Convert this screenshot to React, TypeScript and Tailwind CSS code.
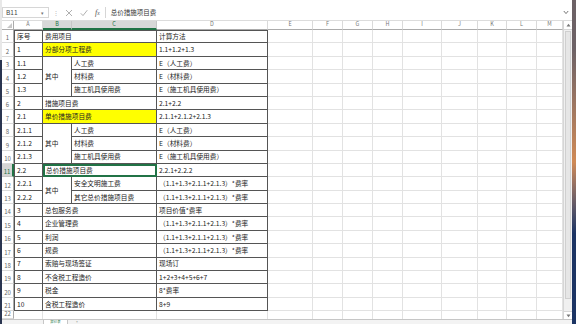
import React from "react"

const COLS = ["A", "B", "C", "D", "E", "F", "G", "H", "I", "J", "K", "L", "M"]
const EMPTY = ["E", "F", "G", "H", "I", "J", "K", "L", "M"]
const RATE = "（1.1+1.3+2.1.1+2.1.3）*费率"

type Row = {
  a: string
  bc?: string
  b?: string
  span?: 2 | 3
  c?: string
  d: string
  yellow?: boolean
  sel?: boolean
}

const rows: Row[] = [
  { a: "序号", bc: "费用项目", d: "计算方法" },
  { a: "1", bc: "分部分项工程费", yellow: true, d: "1.1+1.2+1.3" },
  { a: "1.1", b: "其中", span: 3, c: "人工费", d: "E（人工费）" },
  { a: "1.2", c: "材料费", d: "E（材料费）" },
  { a: "1.3", c: "施工机具使用费", d: "E（施工机具使用费）" },
  { a: "2", bc: "措施项目费", d: "2.1+2.2" },
  { a: "2.1", bc: "单价措施项目费", yellow: true, d: "2.1.1+2.1.2+2.1.3" },
  { a: "2.1.1", b: "其中", span: 3, c: "人工费", d: "E（人工费）" },
  { a: "2.1.2", c: "材料费", d: "E（材料费）" },
  { a: "2.1.3", c: "施工机具使用费", d: "E（施工机具使用费）" },
  { a: "2.2", bc: "总价措施项目费", sel: true, d: "2.2.1+2.2.2" },
  { a: "2.2.1", b: "其中", span: 2, c: "安全文明施工费", d: RATE },
  { a: "2.2.2", c: "其它总价措施项目费", d: RATE },
  { a: "3", bc: "总包服务费", d: "项目价值*费率" },
  { a: "4", bc: "企业管理费", d: RATE },
  { a: "5", bc: "利润", d: RATE },
  { a: "6", bc: "规费", d: RATE },
  { a: "7", bc: "索赔与现场签证", d: "现场订" },
  { a: "8", bc: "不含税工程造价", d: "1+2+3+4+5+6+7" },
  { a: "9", bc: "税金", d: "8*费率" },
  { a: "10", bc: "含税工程造价", d: "8+9" },
]

const cell = "flex items-center pl-[2px] leading-none whitespace-nowrap text-[6.7px] text-[#222] border-r border-b border-[#555]"

function RowHead({ n }: { n: number }) {
  const active = n === 11
  return (
    <div
      className={
        active
          ? "flex items-end justify-center pb-[1px] text-[6px] leading-none text-[#217346] bg-[#d4d4d4] border-b border-[#c6c6c6] border-r-2 border-r-[#217346]"
          : "flex items-end justify-center pb-[1px] text-[6px] leading-none text-[#666] bg-white border-b border-[#dadada] border-r border-r-[#ababab]"
      }
    >
      {n}
    </div>
  )
}

export default function App() {
  const cells: React.ReactNode[] = []

  // header row
  cells.push(
    <div key="corner" className="relative border-r border-b border-[#ababab] bg-white">
      <div className="absolute right-[1px] bottom-[1px] h-0 w-0 [border-bottom:5px_solid_#c8c8c8] [border-left:5px_solid_transparent]" />
    </div>
  )
  COLS.forEach((c) => {
    const active = c === "B" || c === "C"
    cells.push(
      <div
        key={"h" + c}
        className={
          active
            ? "flex items-center justify-center text-[5.5px] leading-none text-[#217346] bg-[#d8d8d8] border-r border-[#c6c6c6] border-b-2 border-b-[#217346]"
            : "flex items-center justify-center text-[5.5px] leading-none text-[#777] bg-white border-r border-[#dadada] border-b border-b-[#ababab]"
        }
      >
        {c}
      </div>
    )
  })

  rows.forEach((r, i) => {
    const n = i + 1
    const top = n === 1 ? " border-t" : ""
    cells.push(<RowHead key={"r" + n} n={n} />)
    cells.push(
      <div key={"a" + n} className={cell + " border-l" + top}>
        {r.a}
      </div>
    )
    if (r.bc !== undefined) {
      cells.push(
        <div
          key={"bc" + n}
          className={
            r.sel
              ? "col-span-2 flex items-center pl-[1px] leading-none whitespace-nowrap text-[6.7px] text-[#222] border-2 border-[#217346]"
              : cell + " col-span-2" + top + (r.yellow ? " bg-[#ffff00]" : "")
          }
        >
          {r.bc}
        </div>
      )
    } else {
      if (r.b) {
        cells.push(
          <div key={"b" + n} className={cell + (r.span === 3 ? " row-span-3" : " row-span-2")}>
            {r.b}
          </div>
        )
      }
      cells.push(
        <div key={"c" + n} className={cell}>
          {r.c}
        </div>
      )
    }
    cells.push(
      <div key={"d" + n} className={cell + top}>
        {r.d}
      </div>
    )
    EMPTY.forEach((c) => cells.push(<div key={c + n} className="border-r border-b border-[#e2e2e2]" />))
  })

  // row 22 (partially visible)
  cells.push(<RowHead key="r22" n={22} />)
  cells.push(<div key="a22" className="border-r border-[#e2e2e2]" />)
  cells.push(<div key="bc22" className="col-span-2 border-r border-[#e2e2e2]" />)
  cells.push(<div key="d22" className="border-r border-[#e2e2e2]" />)
  EMPTY.forEach((c) => cells.push(<div key={c + "22"} className="border-r border-[#e2e2e2]" />))

  return (
    <div className="flex h-[324px] w-[576px] overflow-hidden bg-white font-['Noto_Sans_CJK_SC','Noto_Sans',sans-serif]">
      {/* desktop peeking on the left */}
      <div className="flex w-[2px] flex-col">
        <div className="h-[60px] bg-[#e8e8e8]" />
        <div className="flex-1 bg-[#2a3550]" />
      </div>

      <div className="flex w-[570px] flex-col">
        <div className="h-[5px] bg-white" />

        {/* formula bar */}
        <div className="flex h-[16px] items-center border-b border-[#dcdcdc] bg-white">
          <div className="flex h-[11px] w-[47px] items-center justify-between border border-[#d6d6d6] pl-[3px] pr-[4px]">
            <span className="text-[6.5px] leading-none text-[#444]">B11</span>
            <span className="text-[5px] leading-none text-[#777]">▾</span>
          </div>
          <span className="ml-[4px] text-[6px] leading-none text-[#b0b0b0]">⋮</span>
          <svg className="ml-[6px]" width="8" height="8" viewBox="0 0 8 8">
            <path d="M1 1 L7 7 M7 1 L1 7" stroke="#a6a6a6" strokeWidth="0.9" fill="none" />
          </svg>
          <svg className="ml-[7px]" width="8" height="8" viewBox="0 0 8 8">
            <path d="M0.8 4.3 L3 6.6 L7.3 1.2" stroke="#a6a6a6" strokeWidth="0.9" fill="none" />
          </svg>
          <span className="ml-[7px] font-['Liberation_Serif',serif] text-[8px] italic leading-none text-[#555]">
            f<span className="text-[5.5px]">x</span>
          </span>
          <div className="ml-[5px] flex h-[11px] flex-1 items-center justify-between border-l border-[#d6d6d6] pl-[5px] pr-[3px]">
            <span className="text-[6.5px] leading-none text-[#333]">总价措施项目费</span>
            <svg width="6" height="5" viewBox="0 0 6 5">
              <path d="M0.8 1 L3 3.6 L5.2 1" stroke="#666" strokeWidth="0.9" fill="none" />
            </svg>
          </div>
        </div>

        {/* sheet area */}
        <div className="flex h-[298px]">
          <div className="grid h-[298px] w-[561px] grid-cols-[12px_29px_29px_85px_111px_45px_30px_30px_30px_39px_36px_29px_30px_26px] grid-rows-[9px_repeat(21,13.4px)_1fr]">
            {cells}
          </div>
          {/* vertical scrollbar */}
          <div className="flex w-[9px] flex-col border-l border-[#d6d6d6] bg-[#f0f0f0]">
            <div className="flex h-[9px] items-center justify-center border-b border-[#d6d6d6] bg-white">
              <svg width="5" height="4" viewBox="0 0 5 4">
                <path d="M0.5 3.5 L2.5 0.8 L4.5 3.5 Z" fill="#777" />
              </svg>
            </div>
            <div className="mx-[1px] mt-[1px] h-[268px] border border-[#cfcfcf] bg-[#e6e6e6]" />
            <div className="flex-1" />
            <div className="flex h-[8px] items-center justify-center border-t border-[#d6d6d6] bg-white">
              <svg width="5" height="4" viewBox="0 0 5 4">
                <path d="M0.5 0.5 L2.5 3.2 L4.5 0.5 Z" fill="#777" />
              </svg>
            </div>
          </div>
        </div>

        {/* sheet tabs */}
        <div className="flex h-[5px] items-center border-t border-[#c6c6c6] bg-[#f3f3f3]">
          <div className="ml-[41px] flex h-[4px] w-[25px] items-center justify-center border-x border-[#c6c6c6] bg-white">
            <span className="text-[3.5px] leading-none text-[#217346]">报价表</span>
          </div>
          <span className="ml-[8px] text-[3.5px] leading-none text-[#777]">+</span>
        </div>
      </div>

      {/* desktop peeking on the right */}
      <div className="w-[4px] bg-linear-to-b from-[#6d6266] from-15% via-[#d08a55] via-50% to-[#1c3464] to-72%" />
    </div>
  )
}
